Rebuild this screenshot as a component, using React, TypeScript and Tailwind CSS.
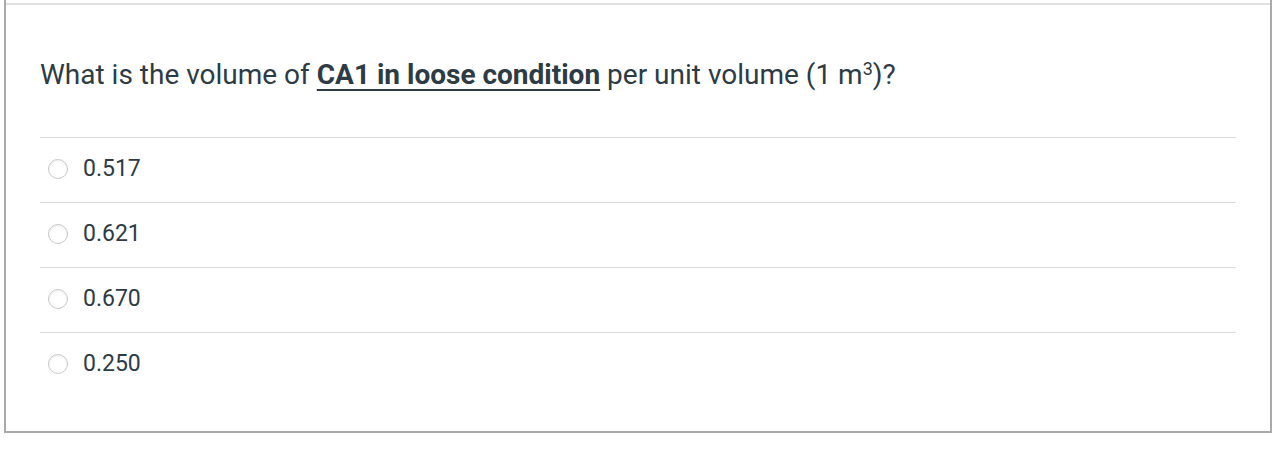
import React from "react";

const options = ["0.517", "0.621", "0.670", "0.250"];

export default function App() {
  return (
    <div className="w-[1284px] h-[450px] bg-white" style={{ fontFamily: "Roboto, 'Liberation Sans', sans-serif" }}>
      <div className="ml-[4px] w-[1268px] h-[433px] border-x-2 border-b-2 border-[#a9a9a9] pt-[3px]">
        <div className="h-[2px] bg-[#e0e0e0]" />
        <div className="px-[34px] text-[#2d3b45]">
          <p className="pt-[50px] text-[28px] leading-[40px]">
            What is the volume of{" "}
            <span className="font-bold underline decoration-2 underline-offset-[5px]">CA1 in loose condition</span> per
            unit volume (1 m<sup className="text-[18px]">3</sup>)?
          </p>
          <div className="mt-[42px]">
            {options.map((o) => (
              <div key={o} className="border-t-[1.5px] border-[#dcdcdc] h-[65px] pb-[2px] flex items-center">
                <span className="ml-[8px] w-[20px] h-[20px] rounded-full border border-[#c8c8c8] bg-white shadow-[inset_0_1px_2px_rgba(0,0,0,0.08)]" />
                <span className="ml-[15px] text-[23px]">{o}</span>
              </div>
            ))}
          </div>
        </div>
      </div>
    </div>
  );
}
